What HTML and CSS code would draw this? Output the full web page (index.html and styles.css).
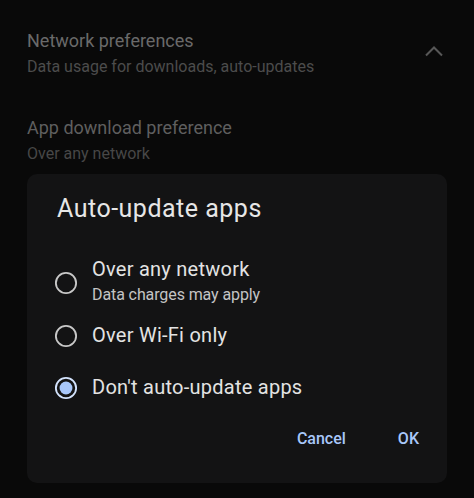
FILE: index.html
```html
<!DOCTYPE html>
<html lang="en">
<head>
<meta charset="UTF-8">
<meta name="viewport" content="width=device-width, initial-scale=1.0">
<title>Auto-update apps</title>
<link rel="stylesheet" href="styles.css">
</head>
<body>
<div class="settings">
    <div class="pref pref-group">
        <div class="pref-text">
            <div class="pref-title">Network preferences</div>
            <div class="pref-sub">Data usage for downloads, auto-updates</div>
        </div>
        <svg class="chevron" width="18" height="11" viewBox="0 0 18 11">
            <polyline points="1,9.5 9,1.5 17,9.5" fill="none" stroke="#575757" stroke-width="2"/>
        </svg>
    </div>
    <div class="pref pref-item">
        <div class="pref-text">
            <div class="pref-title dim">App download preference</div>
            <div class="pref-sub dim">Over any network</div>
        </div>
    </div>
</div>

<div class="dialog">
    <h2 class="dialog-title">Auto-update apps</h2>
    <div class="options">
        <div class="option tall">
            <span class="radio"></span>
            <div class="option-text">
                <div class="option-label">Over any network</div>
                <div class="option-sub">Data charges may apply</div>
            </div>
        </div>
        <div class="option">
            <span class="radio"></span>
            <div class="option-text">
                <div class="option-label">Over Wi-Fi only</div>
            </div>
        </div>
        <div class="option">
            <span class="radio checked"></span>
            <div class="option-text">
                <div class="option-label">Don't auto-update apps</div>
            </div>
        </div>
    </div>
    <div class="dialog-actions">
        <button class="text-btn">Cancel</button>
        <button class="text-btn">OK</button>
    </div>
</div>
</body>
</html>
```

FILE: styles.css
```css
* {
    box-sizing: border-box;
    margin: 0;
    padding: 0;
}

body {
    font-family: Roboto, 'Noto Sans', sans-serif;
    background: #090909;
    width: 474px;
    height: 498px;
    overflow: hidden;
}

.settings {
    padding: 28px 31px 0 27px;
}

.pref {
    display: flex;
    align-items: center;
    justify-content: space-between;
}

.pref-item {
    margin-top: 36px;
}

.pref-title {
    font-size: 18px;
    line-height: 24px;
    color: #6a6a6a;
    padding-top: 1px;
}

.pref-sub {
    font-size: 16px;
    line-height: 24px;
    margin-top: 2px;
    color: #4c4c4c;
}

.pref-title.dim {
    color: #5f5f5f;
}

.pref-sub.dim {
    color: #474747;
}

.chevron {
    margin-top: -4px;
}

.dialog {
    margin: 8px 27px 0;
    background: #131314;
    border-radius: 10px;
    padding: 19px 0 24px;
}

.dialog-title {
    font-size: 25px;
    font-weight: 400;
    line-height: 32px;
    letter-spacing: 0.5px;
    color: #e6e6e6;
    padding-left: 30px;
}

.options {
    margin-top: 30px;
    padding-left: 27px;
}

.option {
    display: flex;
    align-items: center;
    height: 52px;
}

.option.tall {
    height: 54px;
}

.radio {
    width: 24px;
    height: 24px;
    flex-shrink: 0;
    border-radius: 50%;
    border: 2px solid #c8c8c8;
    margin: 1px 14px 0 0;
    background-clip: content-box;
    padding: 3px;
    transform: scale(0.92);
}

.radio.checked {
    border-color: #d3e3fd;
    background-color: #a8c7fa;
}

.option-label {
    font-size: 20px;
    line-height: 24px;
    letter-spacing: 0.25px;
    color: #e3e3e3;
}

.option-sub {
    font-size: 16px;
    line-height: 24px;
    margin-top: 2px;
    letter-spacing: -0.1px;
    color: #c4c4c4;
}

.dialog-actions {
    display: flex;
    justify-content: flex-end;
    gap: 28px;
    padding: 16px 16px 0 0;
}

.text-btn {
    background: none;
    border: none;
    font-family: inherit;
    font-size: 16px;
    font-weight: 500;
    line-height: 20px;
    padding: 0 12px 10px;
    color: #a8c7fa;
    cursor: pointer;
}
```
